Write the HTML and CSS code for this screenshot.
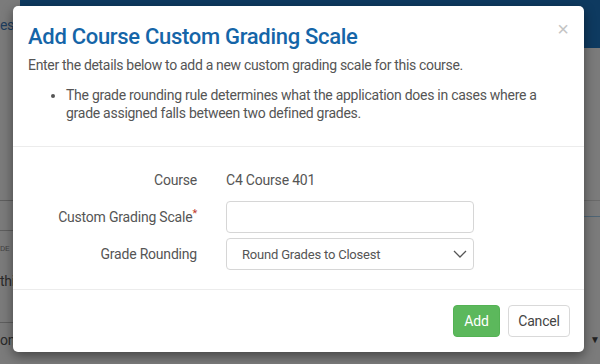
FILE: index.html
```html
<!DOCTYPE html>
<html>
<head>
<meta charset="utf-8">
<link rel="stylesheet" href="styles.css">
</head>
<body>
<div class="page">
  <div class="topbar"><div class="topleft"></div><div class="navy"></div></div>
  <div class="bg-text t1">es</div>
  <div class="bg-line l1"></div>
  <div class="bg-line l2"></div>
  <div class="bg-text t2">DE</div>
  <div class="bg-text t3">thi</div>
  <div class="bg-line l3"></div>
  <div class="bg-text t4">ons</div>
  <div class="rline r1"></div>
  <div class="rline r2"></div>
  <div class="rarrow">▼</div>
</div>

<div class="modal">
  <div class="modal-header">
    <button class="close" aria-label="Close">×</button>
    <h1 class="title">Add Course Custom Grading Scale</h1>
    <p class="subtitle">Enter the details below to add a new custom grading scale for this course.</p>
    <ul class="notes">
      <li>The grade rounding rule determines what the application does in cases where a grade assigned falls between two defined grades.</li>
    </ul>
  </div>
  <div class="modal-body">
    <div class="form-grid">
      <div class="label">Course</div>
      <div class="value">C4 Course 401</div>
      <div class="label">Custom Grading Scale<span class="req">*</span></div>
      <div class="control"><input class="input" type="text"></div>
      <div class="label">Grade Rounding</div>
      <div class="control">
        <div class="select">
          <span>Round Grades to Closest</span>
          <svg class="chev" width="14" height="8" viewBox="0 0 14 8"><path d="M1 1 L7 7 L13 1" fill="none" stroke="#555" stroke-width="1.3"/></svg>
        </div>
      </div>
    </div>
  </div>
  <div class="modal-footer">
    <button class="btn btn-add">Add</button>
    <button class="btn btn-cancel">Cancel</button>
  </div>
</div>
</body>
</html>
```

FILE: styles.css
```css
* { box-sizing: border-box; }
html, body { margin: 0; padding: 0; }
body {
  width: 600px;
  height: 364px;
  overflow: hidden;
  background: #7b7b7b;
  font-family: "Roboto", "Liberation Sans", sans-serif;
  position: relative;
}
.page { position: relative; width: 600px; height: 364px; }
.topbar { display: flex; height: 48px; }
.topleft { width: 20px; background: #7b7b7b; }
.navy { flex: 1; background: #0e3a60; }
.bg-text { position: absolute; left: 0; color: #2a2a2a; font-size: 14px; white-space: nowrap; letter-spacing: -0.3px; }
.t1 { top: 17px; color: #1d3d5e; }
.t2 { top: 244px; font-size: 8px; color: #444; }
.t3 { top: 273px; }
.t4 { top: 332px; }
.bg-line { position: absolute; left: 0; width: 20px; height: 1px; background: #5e5e5e; }
.l1 { top: 200px; }
.l2 { top: 230px; }
.l3 { top: 322px; }
.rline { position: absolute; right: 0; width: 20px; height: 1px; }
.r1 { top: 200px; background: #6a6a6a; }
.r2 { top: 216px; background: #4f6575; }
.rarrow { position: absolute; right: 0; top: 334px; font-size: 10px; color: #222; }

.modal {
  position: absolute;
  left: 13px;
  top: 6px;
  width: 571px;
  height: 346px;
  background: #fff;
  border-radius: 5px;
  box-shadow: 0 4px 12px rgba(0,0,0,0.45);
  display: flex;
  flex-direction: column;
  color: #555;
}
.modal-header {
  position: relative;
  padding: 15px 15px 0 15px;
  height: 141px;
  border-bottom: 1px solid #ececec;
}
.close {
  position: absolute;
  right: 15px;
  top: 13px;
  border: 0;
  background: none;
  padding: 0;
  font-size: 20px;
  line-height: 20px;
  color: #c4c4c4;
  font-family: "Liberation Sans", sans-serif;
}
.title {
  margin: 0;
  font-size: 22px;
  line-height: 32px;
  font-weight: 500;
  color: #1565a8;
  letter-spacing: -0.3px;
}
.subtitle {
  margin: 2px 0 0 0;
  font-size: 14px;
  line-height: 20px;
  letter-spacing: -0.32px;
}
.notes {
  margin: 11px 0 0 0;
  padding-left: 38px;
  font-size: 14px;
  line-height: 18px;
  letter-spacing: -0.27px;
}
.modal-body {
  padding: 17px 15px 0 15px;
  height: 143px;
  border-bottom: 1px solid #ececec;
}
.form-grid {
  display: grid;
  grid-template-columns: 169px 248px;
  column-gap: 29px;
  row-gap: 5px;
  grid-auto-rows: 32px;
  align-items: center;
  font-size: 14px;
  letter-spacing: -0.2px;
}
.label { text-align: right; color: #555; }
.req { color: #c0392b; font-size: 11px; vertical-align: top; position: relative; top: -2px; }
.value { color: #555; }
.control { height: 32px; }
.input {
  width: 248px;
  height: 32px;
  border: 1px solid #d6d6d6;
  border-radius: 4px;
  margin: 0;
  padding: 0 15px;
  font: inherit;
}
.select {
  height: 32px;
  border: 1px solid #d6d6d6;
  border-radius: 4px;
  display: flex;
  align-items: center;
  justify-content: space-between;
  padding: 0 6px 0 15px;
  font-size: 13px;
  color: #555;
}
.chev { display: block; }
.modal-footer {
  flex: 1;
  display: flex;
  justify-content: flex-end;
  align-items: center;
  padding: 0 14px;
  gap: 8px;
}
.btn {
  height: 32px;
  border-radius: 4px;
  font-family: inherit;
  font-size: 14px;
  letter-spacing: -0.2px;
  padding: 0;
  cursor: pointer;
}
.btn-add { background: #5cb85c; border: 1px solid #54b254; color: #fff; width: 47px; }
.btn-cancel { background: #fff; border: 1px solid #d9d9d9; color: #444; width: 62px; }
```
